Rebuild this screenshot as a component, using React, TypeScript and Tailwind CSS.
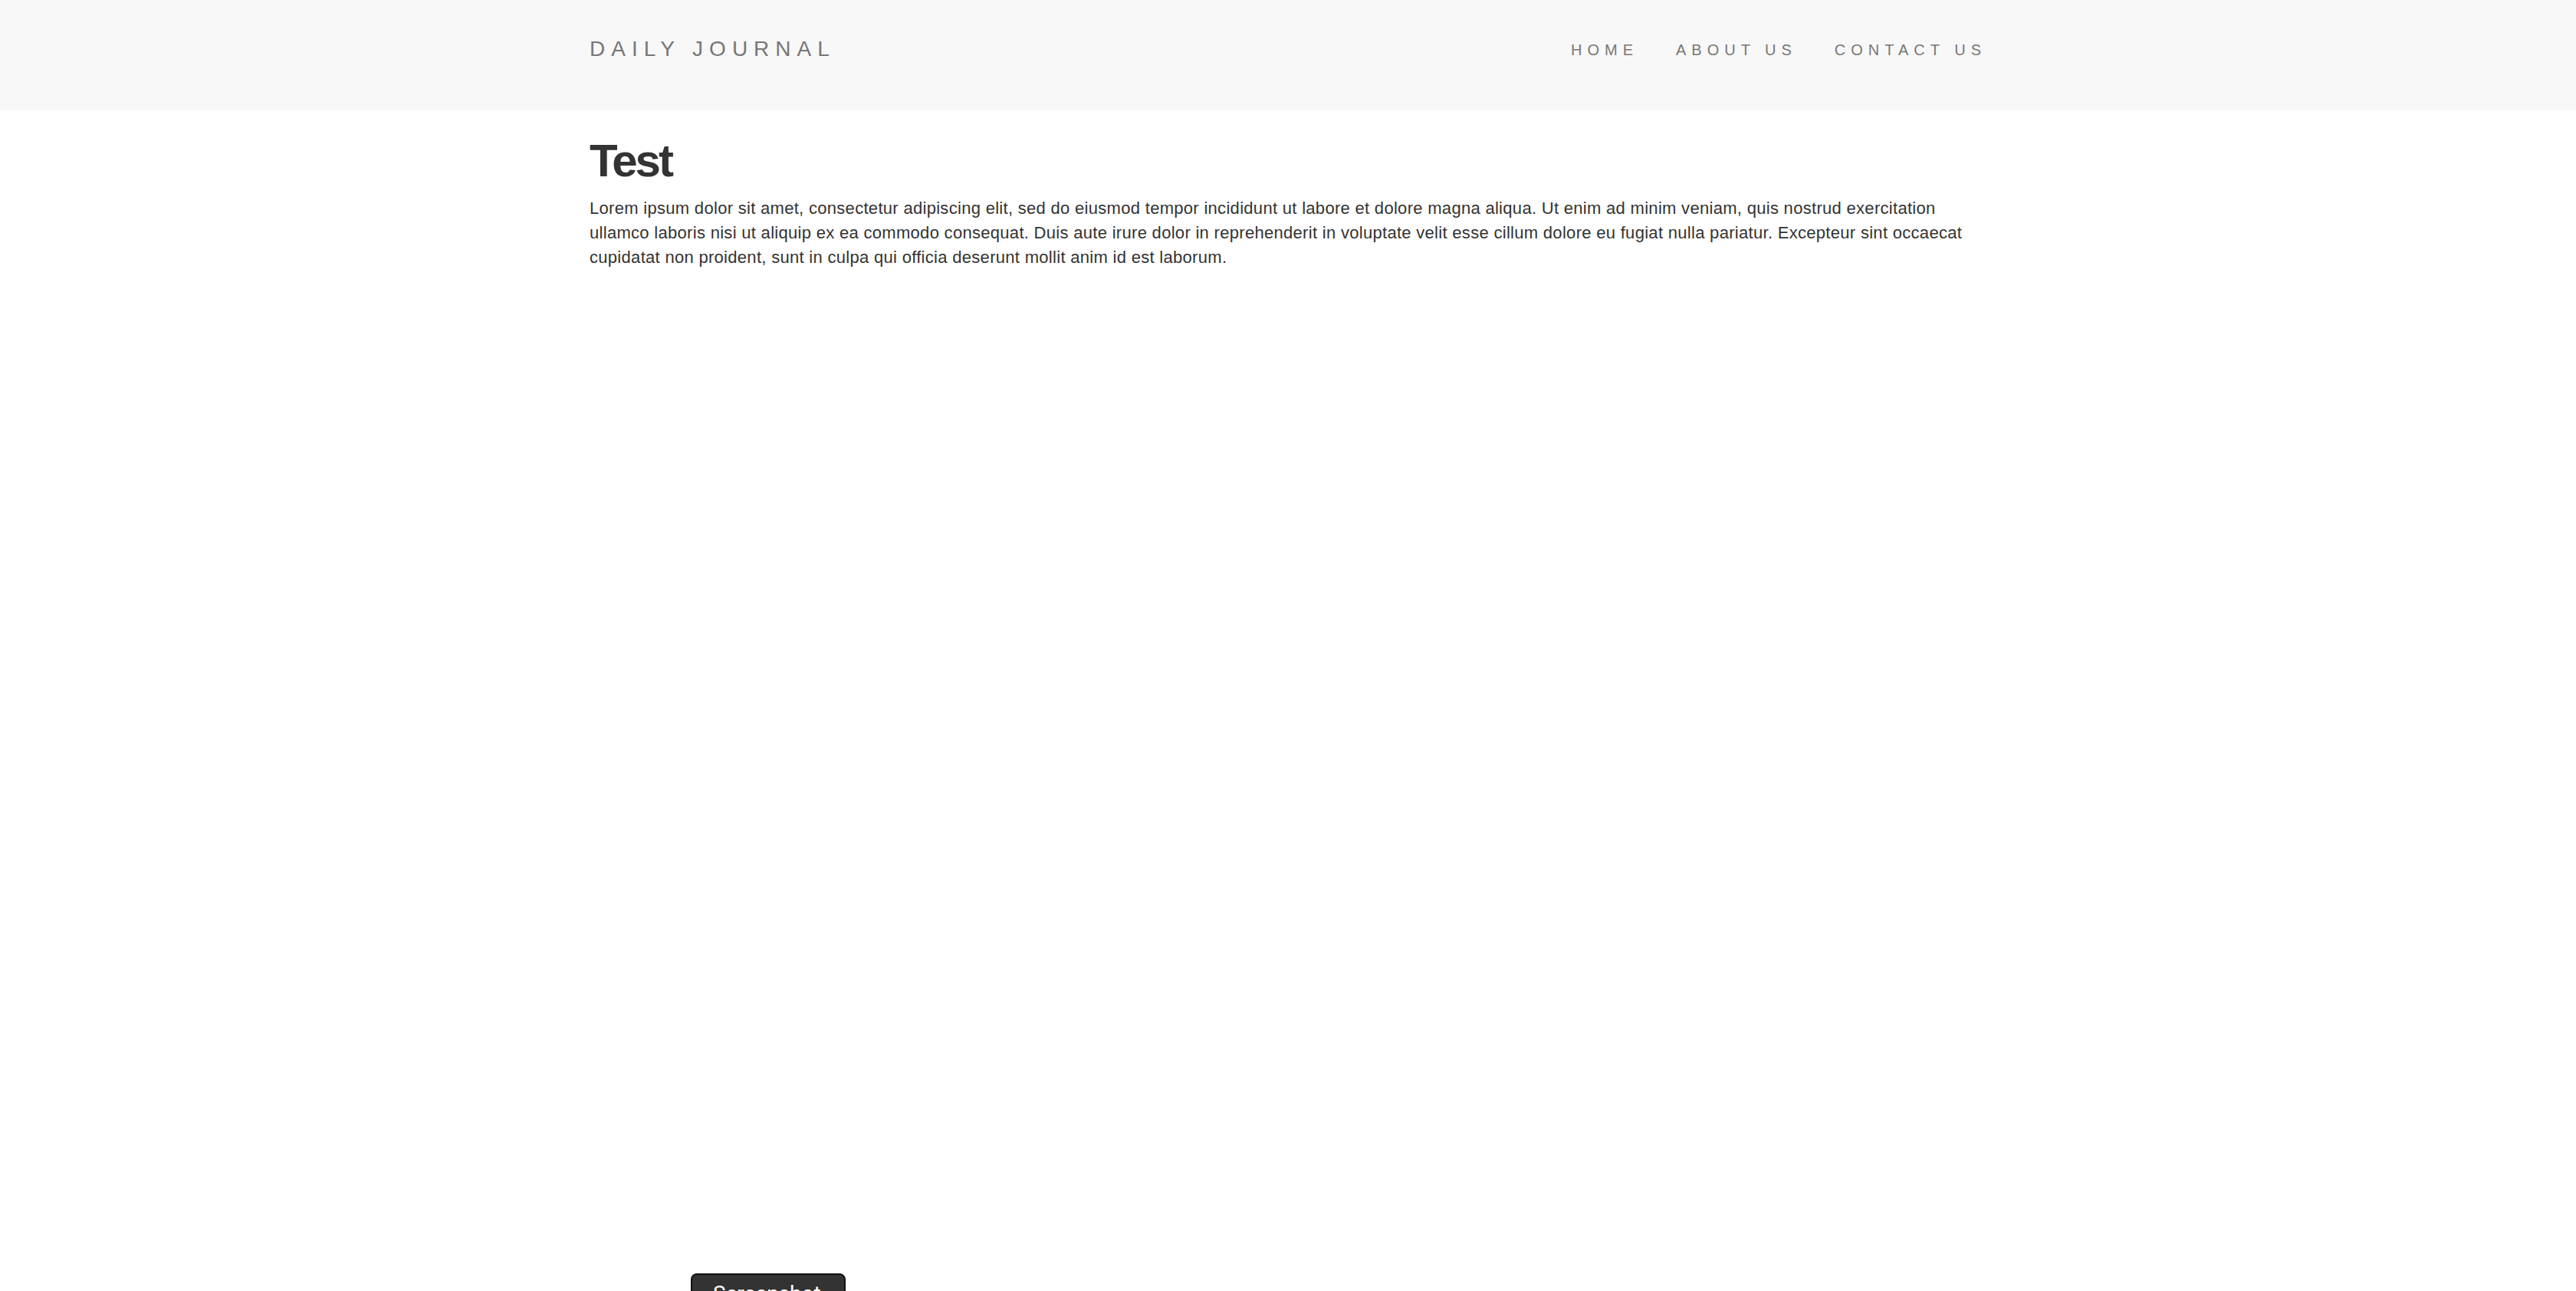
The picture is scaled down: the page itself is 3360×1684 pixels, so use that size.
import React from "react";

export default function App() {
  return (
    <div className="relative min-h-[1684px] bg-white overflow-hidden" style={{ fontFamily: '"Liberation Sans", Arial, Helvetica, sans-serif' }}>
      <header className="h-[144px] bg-[#f8f8f8]">
        <div className="mx-auto flex w-[1822px] items-start justify-between">
          <div className="pt-[50px] text-[28px] leading-[28px] tracking-[8px] text-[#777777]">DAILY JOURNAL</div>
          <nav className="flex gap-[49px] pt-[55px] text-[20px] leading-[20px] tracking-[7px] text-[#777777]">
            <a>HOME</a>
            <a>ABOUT US</a>
            <a>CONTACT US</a>
          </nav>
        </div>
      </header>
      <main className="mx-auto w-[1822px]">
        <h1 className="mt-[36px] text-[60px] font-bold leading-[60px] tracking-[-3px] text-[#333333]">Test</h1>
        <p className="mt-[16px] text-[22px] leading-[32px] tracking-[0.3px] text-[#333333]">
          Lorem ipsum dolor sit amet, consectetur adipiscing elit, sed do eiusmod tempor incididunt ut labore et dolore magna aliqua. Ut enim ad minim veniam, quis nostrud exercitation<br />
          ullamco laboris nisi ut aliquip ex ea commodo consequat. Duis aute irure dolor in reprehenderit in voluptate velit esse cillum dolore eu fugiat nulla pariatur. Excepteur sint occaecat<br />
          cupidatat non proident, sunt in culpa qui officia deserunt mollit anim id est laborum.
        </p>
      </main>
      <button className="absolute left-[901px] top-[1661px] flex h-[60px] w-[202px] items-start rounded-[8px] border-2 border-[#111111] bg-[#333333] pl-[27px] pt-[11px] text-left text-[28px] leading-[28px] text-white" style={{ fontFamily: 'Roboto, "Liberation Sans", sans-serif' }}>
        Screenshot
      </button>
    </div>
  );
}
